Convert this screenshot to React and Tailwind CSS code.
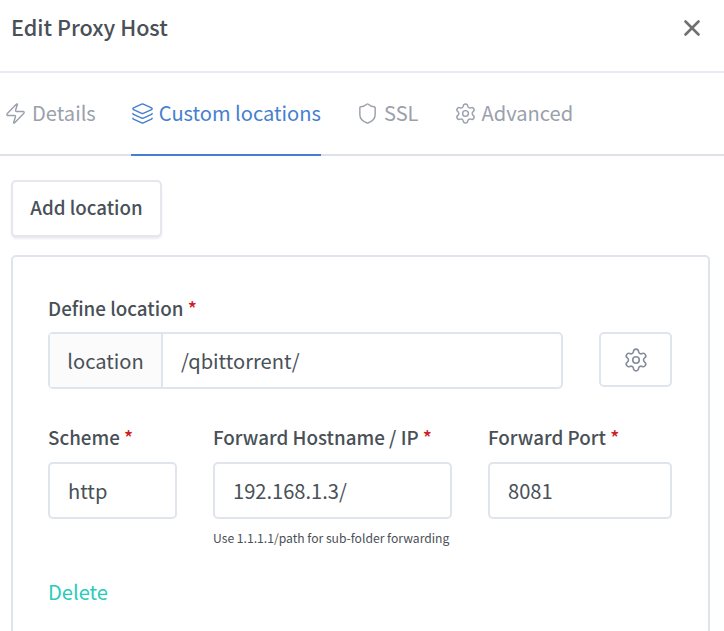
import React from "react";
import { Zap, Layers, Shield, Settings, X } from "lucide-react";

const font = "font-['Noto_Sans_CJK_SC','Noto_Sans',sans-serif]";

function Star() {
  return <span className="text-[#cd201f]"> *</span>;
}

function Field({ label, value, hint }) {
  return (
    <div className="flex flex-col">
      <div className="h-[24px] mb-[13px] flex items-center text-[18.8px] leading-[24px] font-medium text-[#495057] whitespace-nowrap">
        <span>{label}<Star /></span>
      </div>
      <div className="h-[57px] border-2 border-[#e0e4ec] rounded-[5px] pl-[18px] pt-[2px] flex items-center text-[20.1px] text-[#495057] bg-white">
        {value}
      </div>
      {hint && <div className="mt-[10px] text-[12.15px] leading-[18px] text-[#495057] whitespace-nowrap">{hint}</div>}
    </div>
  );
}

function Tab({ icon: Icon, label, active }) {
  return (
    <div className={`h-[83px] flex items-center gap-[5px] text-[20.1px] border-b-2 -mb-[2px] ${active ? "border-[#467fcf] text-[#467fcf]" : "border-transparent text-[#9aa0ac]"}`}>
      <Icon size={23} strokeWidth={1.5} />
      <span>{label}</span>
    </div>
  );
}

export default function App() {
  return (
    <div className={`${font} w-[724px] h-[631px] overflow-hidden bg-white`}>
      <div className="h-[73px] border-b-2 border-[#e9ecf2] flex items-center justify-between pl-[11px] pr-[19px] pb-[16px]">
        <h1 className="text-[21.6px] font-medium text-[#495057]">Edit Proxy Host</h1>
        <X size={26} strokeWidth={2.4} className="text-[#707070]" />
      </div>
      <div className="h-[83px] border-b-2 border-[#dee1e7] flex pl-[4px] gap-[35px]">
        <Tab icon={Zap} label="Details" />
        <Tab icon={Layers} label="Custom locations" active />
        <Tab icon={Shield} label="SSL" />
        <Tab icon={Settings} label="Advanced" />
      </div>
      <div className="pl-[11px] pt-[24px]">
        <button className="h-[57px] w-[151px] pb-[2px] border-2 border-[#e4e7ed] rounded-[5px] bg-white text-[18.7px] font-medium text-[#495057] shadow-[0_2px_2px_rgba(0,0,0,0.08)]">
          Add location
        </button>
        <div className="mt-[18px] w-[699px] h-[400px] border-2 border-[#e0e4ec] rounded-[5px] pl-[35px] pt-[39px]">
          <div className="h-[24px] mb-[12px] flex items-center text-[18.8px] font-medium text-[#495057]">
            <span>Define location<Star /></span>
          </div>
          <div className="flex gap-[36px] items-start">
            <div className="w-[515px] h-[57px] flex border-2 border-[#e0e4ec] rounded-[5px] text-[20.1px] text-[#495057]">
              <div className="w-[113px] pt-[2px] bg-[#fbfbfc] border-r-2 border-[#e0e4ec] flex items-center justify-center">location</div>
              <div className="flex-1 pl-[18px] pt-[2px] flex items-center">/qbittorrent/</div>
            </div>
            <div className="w-[73px] h-[55px] border-2 border-[#e0e4ec] rounded-[5px] flex items-center justify-center text-[#868e9c]">
              <Settings size={26} strokeWidth={1.5} />
            </div>
          </div>
          <div className="mt-[36px] grid grid-cols-[129px_239px_184px] gap-x-[36px]">
            <Field label="Scheme" value="http" />
            <Field label="Forward Hostname / IP" value="192.168.1.3/" hint="Use 1.1.1.1/path for sub-folder forwarding" />
            <Field label="Forward Port" value="8081" />
          </div>
          <div className="mt-[30px] text-[20.1px] leading-[30px] text-[#2bcbba]">Delete</div>
        </div>
      </div>
    </div>
  );
}
